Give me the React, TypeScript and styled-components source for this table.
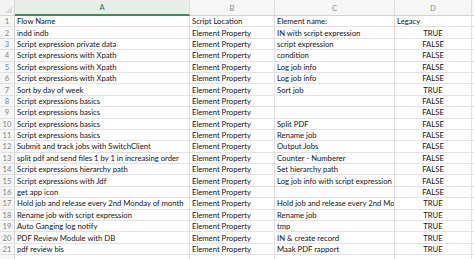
import React from "react";
import styled, { createGlobalStyle } from "styled-components";

const GlobalStyle = createGlobalStyle`
  html, body {
    margin: 0;
    padding: 0;
    background: #ffffff;
  }
`;

const ROW_H = 11.4;

const Sheet = styled.div`
  display: grid;
  grid-template-columns: 15px 175px 85px 120px 77px 1fr;
  grid-auto-rows: ${ROW_H}px;
  grid-template-rows: 16px;
  width: 474px;
  height: 259px;
  overflow: hidden;
  font-family: Lato, "Liberation Sans", sans-serif;
  font-size: 7.7px;
  color: #141414;
`;

const Corner = styled.div`
  position: relative;
  background: #f4f4f4;
  border-right: 1px solid #d4d4d4;
  border-bottom: 1px solid #d4d4d4;

  &::after {
    content: "";
    position: absolute;
    right: 2px;
    bottom: 2px;
    border-left: 7px solid transparent;
    border-bottom: 7px solid #dcdcdc;
  }
`;

const ColHead = styled.div<{ $active?: boolean }>`
  display: flex;
  align-items: center;
  justify-content: center;
  background: ${(p) => (p.$active ? "#e7efe9" : "#f6f6f6")};
  color: ${(p) => (p.$active ? "#2c6a45" : "#8a8a8a")};
  border-right: 1px solid #dedede;
  border-bottom: ${(p) => (p.$active ? "2px solid #3f8a5e" : "1px solid #d4d4d4")};
  font-size: 7.6px;
`;

const RowHead = styled.div`
  display: flex;
  align-items: center;
  justify-content: center;
  background: #f6f6f6;
  color: #858585;
  border-right: 1px solid #d4d4d4;
  border-bottom: 1px solid #e2e2e2;
`;

const Cell = styled.div<{ $center?: boolean }>`
  display: flex;
  align-items: center;
  justify-content: ${(p) => (p.$center ? "center" : "flex-start")};
  padding: 0 2px;
  white-space: nowrap;
  overflow: hidden;
  border-right: 1px solid #e2e2e2;
  border-bottom: 1px solid #e2e2e2;
`;

type Row = [string, string, string, string];

const rows: Row[] = [
  ["Flow Name", "Script Location", "Element name:", "Legacy"],
  ["indd indb", "Element Property", "IN with script expression", "TRUE"],
  ["Script expression private data", "Element Property", "script expression", "FALSE"],
  ["Script expressions with Xpath", "Element Property", "condition", "FALSE"],
  ["Script expressions with Xpath", "Element Property", "Log job info", "FALSE"],
  ["Script expressions with Xpath", "Element Property", "Log job info", "FALSE"],
  ["Sort by day of week", "Element Property", "Sort job", "TRUE"],
  ["Script expressions basics", "Element Property", "", "FALSE"],
  ["Script expressions basics", "Element Property", "", "FALSE"],
  ["Script expressions basics", "Element Property", "Split PDF", "FALSE"],
  ["Script expressions basics", "Element Property", "Rename job", "FALSE"],
  ["Submit and track jobs with SwitchClient", "Element Property", "Output Jobs", "FALSE"],
  ["split pdf and send files 1 by 1 in increasing order", "Element Property", "Counter - Numberer", "FALSE"],
  ["Script expressions hierarchy path", "Element Property", "Set hierarchy path", "FALSE"],
  ["Script expressions with Jdf", "Element Property", "Log job info with script expression", "FALSE"],
  ["get app icon", "Element Property", "", "FALSE"],
  ["Hold job and release every 2nd Monday of month", "Element Property", "Hold job and release every 2nd Mo", "TRUE"],
  ["Rename job with script expression", "Element Property", "Rename job", "TRUE"],
  ["Auto Ganging log notify", "Element Property", "tmp", "TRUE"],
  ["PDF Review Module with DB", "Element Property", "IN & create record", "TRUE"],
  ["pdf review bis", "Element Property", "Maak PDF rapport", "TRUE"],
  ["", "", "", ""],
];

const columns = ["A", "B", "C", "D", ""];

const App = () => {
  return (
    <>
      <GlobalStyle />
      <Sheet>
        <Corner />
        {columns.map((c) => (
          <ColHead key={c || "E"} $active={c === "A"}>
            {c}
          </ColHead>
        ))}
        {rows.map((r, i) => (
          <React.Fragment key={i}>
            <RowHead>{i < 21 ? i + 1 : ""}</RowHead>
            <Cell>{r[0]}</Cell>
            <Cell>{r[1]}</Cell>
            <Cell>{r[2]}</Cell>
            <Cell $center={i > 0}>{r[3]}</Cell>
            <Cell />
          </React.Fragment>
        ))}
      </Sheet>
    </>
  );
};

export default App;
